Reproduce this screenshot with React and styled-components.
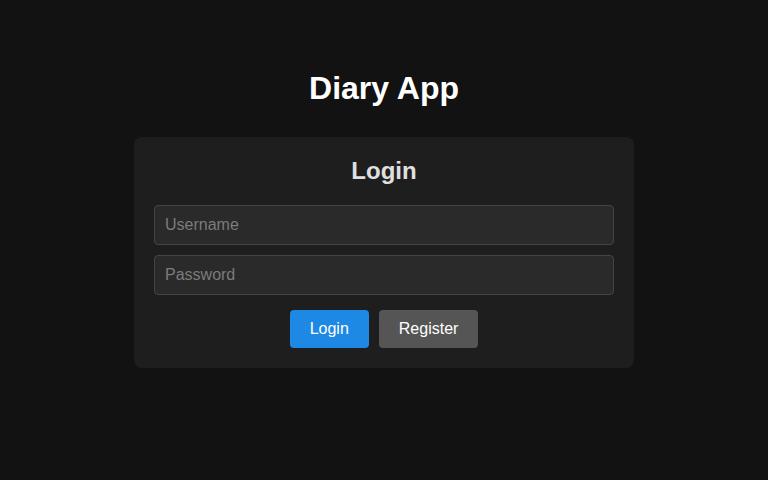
import styled, { createGlobalStyle } from "styled-components";

const GlobalStyle = createGlobalStyle`
    html, body {
        margin: 0;
        background-color: #121212;
        font-family: "Liberation Sans", Arial, sans-serif;
        color: #e0e0e0;
    }
`

const Page = styled.div`
    min-height: 100vh;
    padding-top: 70px;
    box-sizing: border-box;
    display: flex;
    flex-direction: column;
    align-items: center;
`

const Title = styled.h1`
    margin: 0 0 30px;
    font-size: 32px;
    line-height: 37px;
    font-weight: bold;
    color: #ffffff;
`

const Card = styled.div`
    width: 500px;
    box-sizing: border-box;
    padding: 20px;
    background-color: #1e1e1e;
    border-radius: 8px;
    display: flex;
    flex-direction: column;
`

const CardTitle = styled.h2`
    margin: 0 0 20px;
    font-size: 24px;
    line-height: 28px;
    text-align: center;
    color: #e0e0e0;
`

const Input = styled.input`
    height: 40px;
    box-sizing: border-box;
    margin-bottom: 10px;
    padding: 0 10px;
    background-color: #2a2a2a;
    border: 1px solid #444;
    border-radius: 4px;
    color: #e0e0e0;
    font-family: inherit;
    font-size: 16px;
    outline: none;

    &::placeholder {
        color: #7c7c7c;
    }
`

const Buttons = styled.div`
    margin-top: 5px;
    display: flex;
    justify-content: center;
    gap: 10px;
`

const Button = styled.button`
    height: 38px;
    padding: 0 20px;
    border: none;
    border-radius: 4px;
    font-family: inherit;
    font-size: 16px;
    color: #ffffff;
    cursor: pointer;
    background-color: ${props => props.secondary ? '#555555' : '#1e88e5'};
`

function App(){
    return(
        <>
            <GlobalStyle />
            <Page>
                <Title>Diary App</Title>
                <Card>
                    <CardTitle>Login</CardTitle>
                    <Input type="text" placeholder="Username" />
                    <Input type="password" placeholder="Password" />
                    <Buttons>
                        <Button>Login</Button>
                        <Button secondary>Register</Button>
                    </Buttons>
                </Card>
            </Page>
        </>
    )
}

export default App;
